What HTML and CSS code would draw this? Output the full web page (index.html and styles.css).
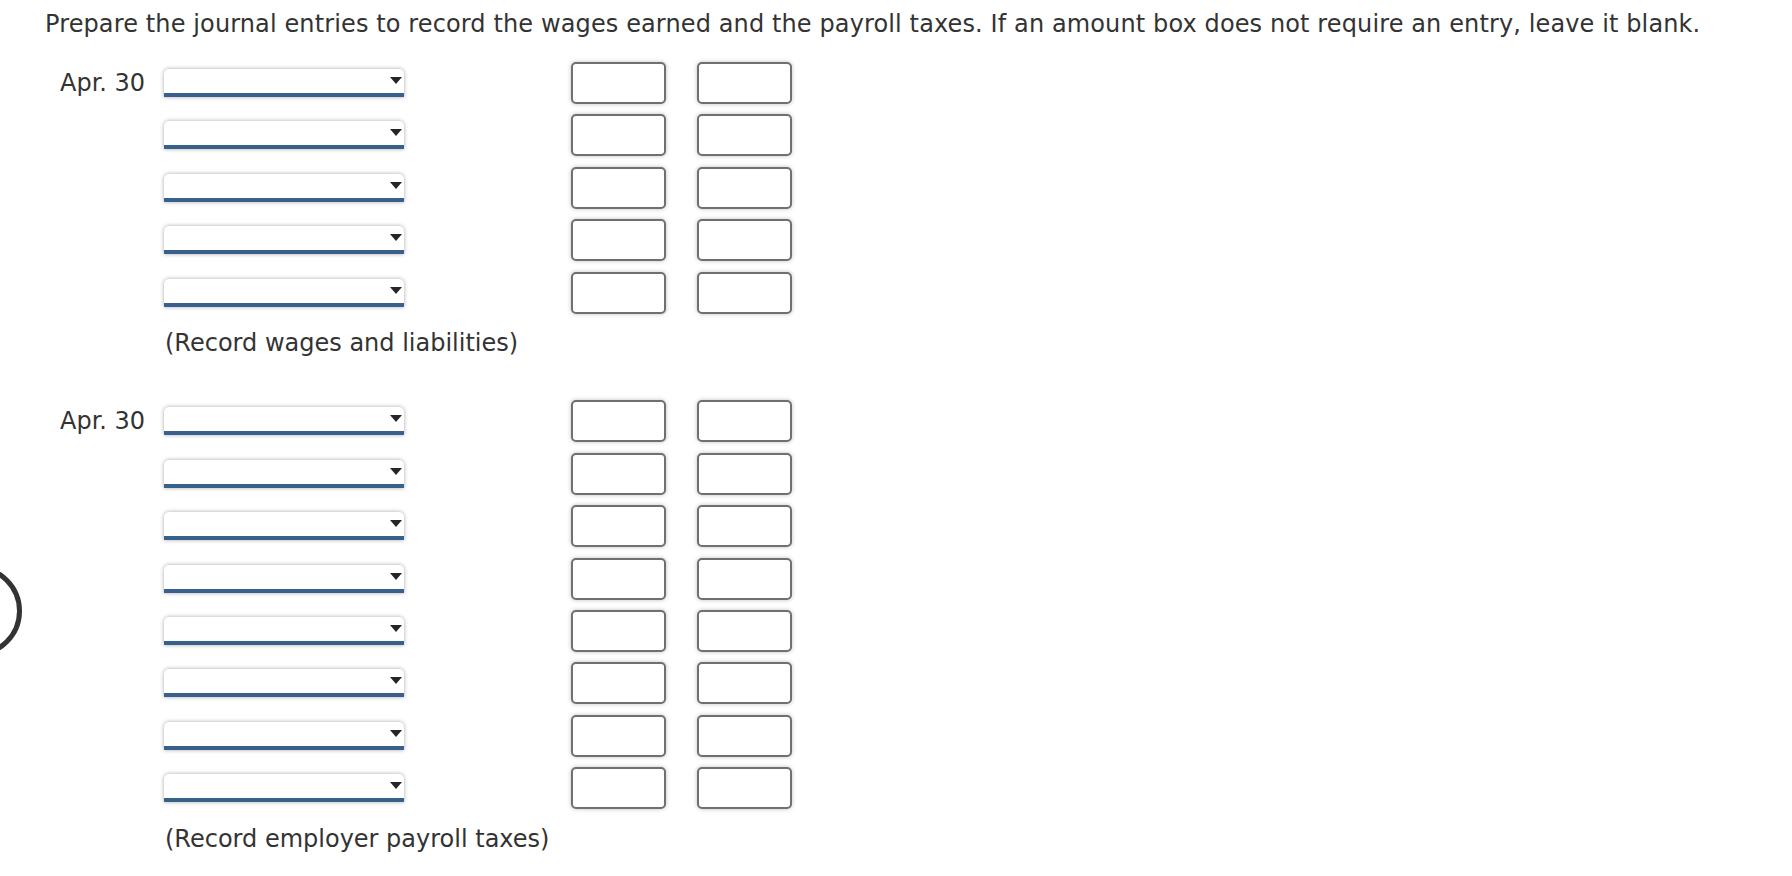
FILE: index.html
```html
<!DOCTYPE html>
<html lang="en">

<head>
    <meta charset="UTF-8">
    <meta name="viewport" content="width=device-width, initial-scale=1.0">
    <title>Journal Entries</title>
    <link rel="stylesheet" href="styles.css">
</head>

<body>
    <p class="prompt">Prepare the journal entries to record the wages earned and the payroll taxes. If an amount box does not require an entry, leave it blank.</p>

    <div class="journal">
        <div class="date">Apr. 30</div>
        <div class="acct"><span class="pick"><select></select></span></div>
        <div class="amt"><input type="text"></div>
        <div class="amt"><input type="text"></div>

        <div class="date"></div>
        <div class="acct"><span class="pick"><select></select></span></div>
        <div class="amt"><input type="text"></div>
        <div class="amt"><input type="text"></div>

        <div class="date"></div>
        <div class="acct"><span class="pick"><select></select></span></div>
        <div class="amt"><input type="text"></div>
        <div class="amt"><input type="text"></div>

        <div class="date"></div>
        <div class="acct"><span class="pick"><select></select></span></div>
        <div class="amt"><input type="text"></div>
        <div class="amt"><input type="text"></div>

        <div class="date"></div>
        <div class="acct"><span class="pick"><select></select></span></div>
        <div class="amt"><input type="text"></div>
        <div class="amt"><input type="text"></div>
    </div>
    <div class="note">(Record wages and liabilities)</div>

    <div class="journal second">
        <div class="date">Apr. 30</div>
        <div class="acct"><span class="pick"><select></select></span></div>
        <div class="amt"><input type="text"></div>
        <div class="amt"><input type="text"></div>

        <div class="date"></div>
        <div class="acct"><span class="pick"><select></select></span></div>
        <div class="amt"><input type="text"></div>
        <div class="amt"><input type="text"></div>

        <div class="date"></div>
        <div class="acct"><span class="pick"><select></select></span></div>
        <div class="amt"><input type="text"></div>
        <div class="amt"><input type="text"></div>

        <div class="date"></div>
        <div class="acct"><span class="pick"><select></select></span></div>
        <div class="amt"><input type="text"></div>
        <div class="amt"><input type="text"></div>

        <div class="date"></div>
        <div class="acct"><span class="pick"><select></select></span></div>
        <div class="amt"><input type="text"></div>
        <div class="amt"><input type="text"></div>

        <div class="date"></div>
        <div class="acct"><span class="pick"><select></select></span></div>
        <div class="amt"><input type="text"></div>
        <div class="amt"><input type="text"></div>

        <div class="date"></div>
        <div class="acct"><span class="pick"><select></select></span></div>
        <div class="amt"><input type="text"></div>
        <div class="amt"><input type="text"></div>

        <div class="date"></div>
        <div class="acct"><span class="pick"><select></select></span></div>
        <div class="amt"><input type="text"></div>
        <div class="amt"><input type="text"></div>
    </div>
    <div class="note">(Record employer payroll taxes)</div>

    <div class="ring"></div>
</body>

</html>
```

FILE: styles.css
```css
* {
    box-sizing: border-box;
}

body {
    margin: 0;
    font-family: "DejaVu Sans", Verdana, sans-serif;
    font-size: 24px;
    line-height: 28px;
    color: #333333;
    background: #ffffff;
}

.prompt {
    margin: 0;
    padding: 10px 0 0 45px;
    letter-spacing: 0.12px;
}

.journal {
    display: grid;
    grid-template-columns: 104px 407px 126px 95px;
    grid-auto-rows: 52.4px;
    align-items: center;
    margin: 18.8px 0 0 60px;
}

.journal.second {
    margin-top: 37.8px;
}

.note {
    margin: 10.6px 0 0 165px;
}

.pick {
    position: relative;
    display: block;
    width: 240px;
    height: 28px;
}

.pick::after {
    content: "";
    position: absolute;
    right: 2px;
    top: 8px;
    border-left: 6.5px solid transparent;
    border-right: 6.5px solid transparent;
    border-top: 7px solid #262626;
    pointer-events: none;
}

select {
    -webkit-appearance: none;
    appearance: none;
    display: block;
    width: 240px;
    height: 28px;
    border: none;
    border-bottom: 4px solid #37618c;
    border-radius: 5px 5px 0 0;
    background: #ffffff;
    box-shadow: 0 0 4px rgba(0, 0, 0, 0.35);
    outline: none;
}

.amt input {
    display: block;
    width: 95px;
    height: 42px;
    border: 2px solid #707070;
    border-radius: 5px;
    background: #ffffff;
    box-shadow: 0 0 4px rgba(0, 0, 0, 0.25);
    outline: none;
}

.ring {
    position: fixed;
    left: -70px;
    top: 565px;
    width: 92px;
    height: 92px;
    border: 5.5px solid #333333;
    border-radius: 50%;
}
```
